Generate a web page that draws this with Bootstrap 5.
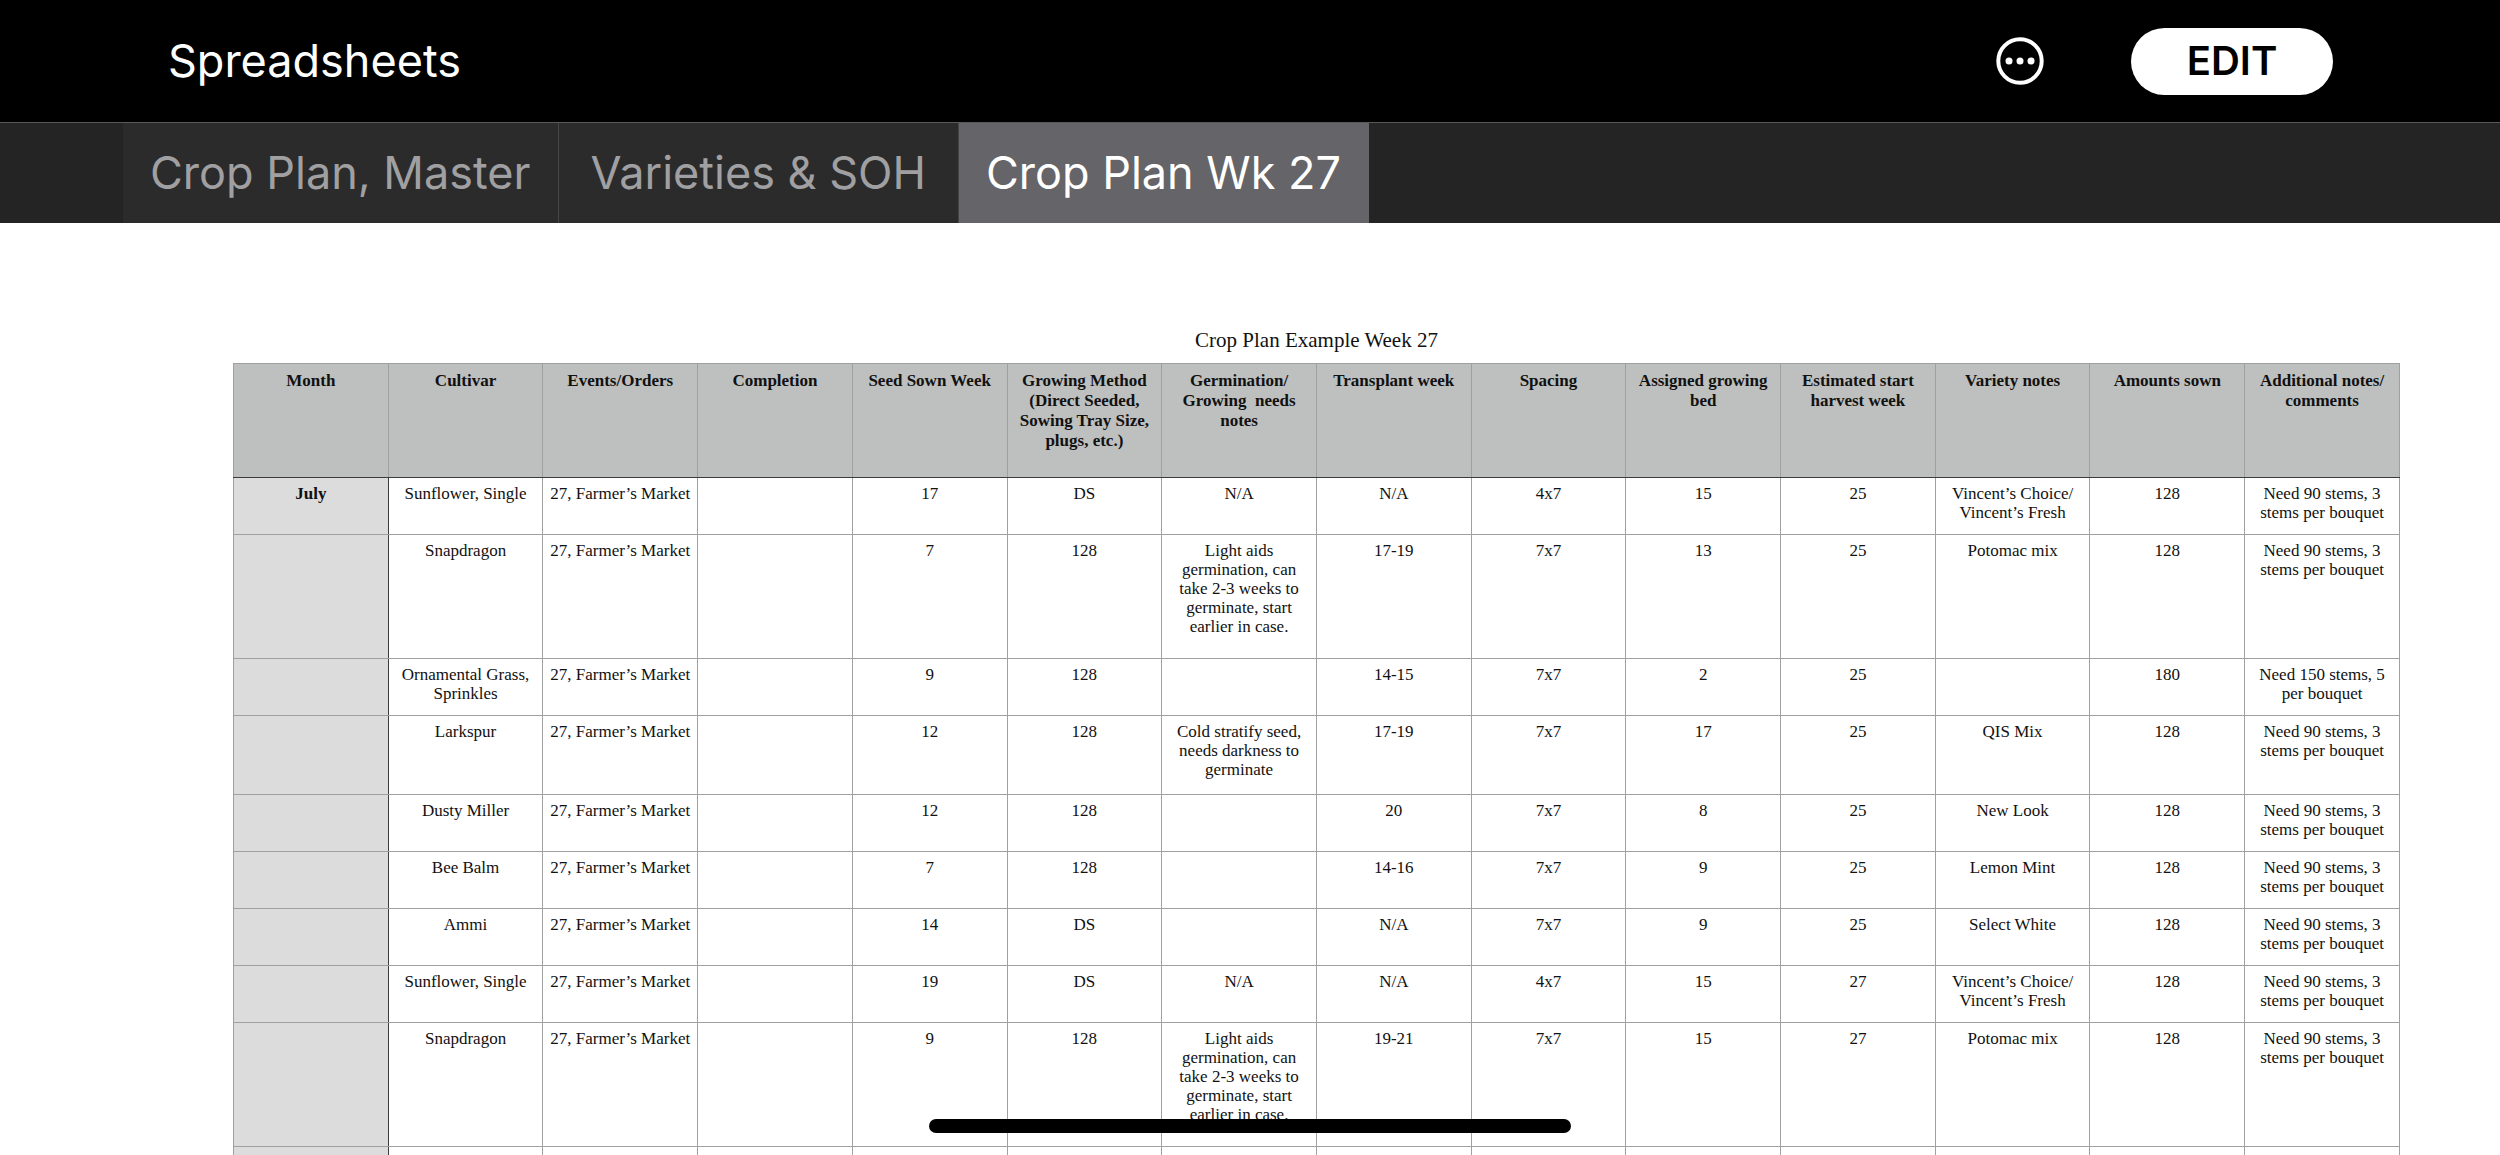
<!DOCTYPE html>
<html lang="en">
<head>
<meta charset="utf-8">
<meta name="viewport" content="width=device-width, initial-scale=1">
<title>Spreadsheets</title>
<link href="https://cdn.jsdelivr.net/npm/bootstrap@5.3.0/dist/css/bootstrap.min.css" rel="stylesheet">
<style>
  body { font-family: Inter, "Liberation Sans", sans-serif; background: #fff; }
  .app-shell { height: 100vh; }
  .top-bar { height: 122px; padding: 0 167px 0 168px; }
  .app-title { font-size: 45px; line-height: 56px; color: #fff; }
  .more-btn { width: 48px; height: 48px; margin-right: 87px; }
  .edit-btn { width: 202px; height: 67px; font-size: 40px; line-height: 48px; font-weight: 600; color: #000; }
  .tab-strip { height: 101px; background: #242424; border-top: 1px solid #59595b; padding-left: 123px; }
  .sheet-tab { font-size: 45px; line-height: 56px; padding: 0 27px; color: #a0a0a3; background: #2b2b2c; border-right: 1px solid #454547; text-decoration: none; white-space: nowrap; }
  .sheet-tab.tab-wide { padding: 0 32px; }
  .sheet-tab.active { color: #fff; background: #656468; border-color: #656468; }
  .sheet-area { padding: 103px 100px 0 233px; font-family: "Liberation Serif", serif; color: #111; }
  .crop-table { table-layout: fixed; border-collapse: collapse; width: 100%; font-size: 17px; line-height: 19px; text-align: center; }
  .crop-table caption { caption-side: top; padding: 0 0 9px; font-size: 21px; line-height: 28px; color: #111; text-align: center; }
  .crop-table th, .crop-table td { border: 1px solid #a0a0a0; padding: 6px 4px 0; vertical-align: top; }
  .crop-table thead th { height: 114px; padding-top: 7px; background: #bec0bf; border-bottom-color: #3c3c3c; line-height: 20px; white-space: pre-line; }
  .crop-table tbody th { background: #dcdcdc; border-right-color: #3c3c3c; }
  .crop-table tbody tr { height: 57px; }
  .crop-table tbody tr.row-mid { height: 79px; }
  .crop-table tbody tr.row-tall { height: 124px; }
  .home-bar { bottom: 22px; width: 642px; height: 14px; background: #000; }
</style>
</head>
<body>
<div class="app-shell d-flex flex-column overflow-hidden position-relative">
  <header class="top-bar bg-black d-flex align-items-center flex-shrink-0">
    <h1 class="app-title fw-normal mb-0 me-auto">Spreadsheets</h1>
    <button type="button" class="more-btn btn p-0 border-0 d-flex" aria-label="More options">
      <svg width="48" height="48" viewBox="0 0 48 48" fill="#fff" aria-hidden="true">
        <circle cx="24" cy="24" r="21.7" fill="none" stroke="#fff" stroke-width="4"/>
        <circle cx="13" cy="24" r="3.5"/><circle cx="24" cy="24" r="3.5"/><circle cx="35" cy="24" r="3.5"/>
      </svg>
    </button>
    <button type="button" class="edit-btn btn btn-light bg-white rounded-pill border-0 p-0">EDIT</button>
  </header>
  <nav class="tab-strip d-flex flex-shrink-0" aria-label="Sheets">
    <a href="#" class="sheet-tab d-flex align-items-center">Crop Plan, Master</a>
    <a href="#" class="sheet-tab tab-wide d-flex align-items-center">Varieties &amp; SOH</a>
    <a href="#" class="sheet-tab active d-flex align-items-center" aria-current="page">Crop Plan Wk 27</a>
  </nav>
  <main class="sheet-area flex-grow-1">
    <table class="crop-table">
      <caption>Crop Plan Example Week 27</caption>
      <thead>
        <tr>
          <th scope="col">Month</th><th scope="col">Cultivar</th><th scope="col">Events/Orders</th><th scope="col">Completion</th><th scope="col">Seed Sown Week</th><th scope="col">Growing Method
(Direct Seeded,
Sowing Tray Size,
plugs, etc.)</th><th scope="col">Germination/
Growing &nbsp;needs
notes</th><th scope="col">Transplant week</th><th scope="col">Spacing</th><th scope="col">Assigned growing bed</th><th scope="col">Estimated start harvest week</th><th scope="col">Variety notes</th><th scope="col">Amounts sown</th><th scope="col">Additional notes/
comments</th>
        </tr>
      </thead>
      <tbody>
        <tr><th scope="row">July</th><td>Sunflower, Single</td><td>27, Farmer’s Market</td><td></td><td>17</td><td>DS</td><td>N/A</td><td>N/A</td><td>4x7</td><td>15</td><td>25</td><td>Vincent’s Choice/<br>Vincent’s Fresh</td><td>128</td><td>Need 90 stems, 3 stems per bouquet</td></tr>
        <tr class="row-tall"><th scope="row"></th><td>Snapdragon</td><td>27, Farmer’s Market</td><td></td><td>7</td><td>128</td><td>Light aids<br>germination, can<br>take 2-3 weeks to<br>germinate, start<br>earlier in case.</td><td>17-19</td><td>7x7</td><td>13</td><td>25</td><td>Potomac mix</td><td>128</td><td>Need 90 stems, 3 stems per bouquet</td></tr>
        <tr><th scope="row"></th><td>Ornamental Grass, Sprinkles</td><td>27, Farmer’s Market</td><td></td><td>9</td><td>128</td><td></td><td>14-15</td><td>7x7</td><td>2</td><td>25</td><td></td><td>180</td><td>Need 150 stems, 5 per bouquet</td></tr>
        <tr class="row-mid"><th scope="row"></th><td>Larkspur</td><td>27, Farmer’s Market</td><td></td><td>12</td><td>128</td><td>Cold stratify seed, needs darkness to germinate</td><td>17-19</td><td>7x7</td><td>17</td><td>25</td><td>QIS Mix</td><td>128</td><td>Need 90 stems, 3 stems per bouquet</td></tr>
        <tr><th scope="row"></th><td>Dusty Miller</td><td>27, Farmer’s Market</td><td></td><td>12</td><td>128</td><td></td><td>20</td><td>7x7</td><td>8</td><td>25</td><td>New Look</td><td>128</td><td>Need 90 stems, 3 stems per bouquet</td></tr>
        <tr><th scope="row"></th><td>Bee Balm</td><td>27, Farmer’s Market</td><td></td><td>7</td><td>128</td><td></td><td>14-16</td><td>7x7</td><td>9</td><td>25</td><td>Lemon Mint</td><td>128</td><td>Need 90 stems, 3 stems per bouquet</td></tr>
        <tr><th scope="row"></th><td>Ammi</td><td>27, Farmer’s Market</td><td></td><td>14</td><td>DS</td><td></td><td>N/A</td><td>7x7</td><td>9</td><td>25</td><td>Select White</td><td>128</td><td>Need 90 stems, 3 stems per bouquet</td></tr>
        <tr><th scope="row"></th><td>Sunflower, Single</td><td>27, Farmer’s Market</td><td></td><td>19</td><td>DS</td><td>N/A</td><td>N/A</td><td>4x7</td><td>15</td><td>27</td><td>Vincent’s Choice/<br>Vincent’s Fresh</td><td>128</td><td>Need 90 stems, 3 stems per bouquet</td></tr>
        <tr class="row-tall"><th scope="row"></th><td>Snapdragon</td><td>27, Farmer’s Market</td><td></td><td>9</td><td>128</td><td>Light aids<br>germination, can<br>take 2-3 weeks to<br>germinate, start<br>earlier in case.</td><td>19-21</td><td>7x7</td><td>15</td><td>27</td><td>Potomac mix</td><td>128</td><td>Need 90 stems, 3 stems per bouquet</td></tr>
        <tr><th scope="row"></th><td></td><td></td><td></td><td></td><td></td><td></td><td></td><td></td><td></td><td></td><td></td><td></td><td></td></tr>
      </tbody>
    </table>
  </main>
  <div class="home-bar position-absolute start-50 translate-middle-x rounded-pill"></div>
</div>
<script src="https://cdn.jsdelivr.net/npm/bootstrap@5.3.0/dist/js/bootstrap.bundle.min.js"></script>
</body>
</html>
